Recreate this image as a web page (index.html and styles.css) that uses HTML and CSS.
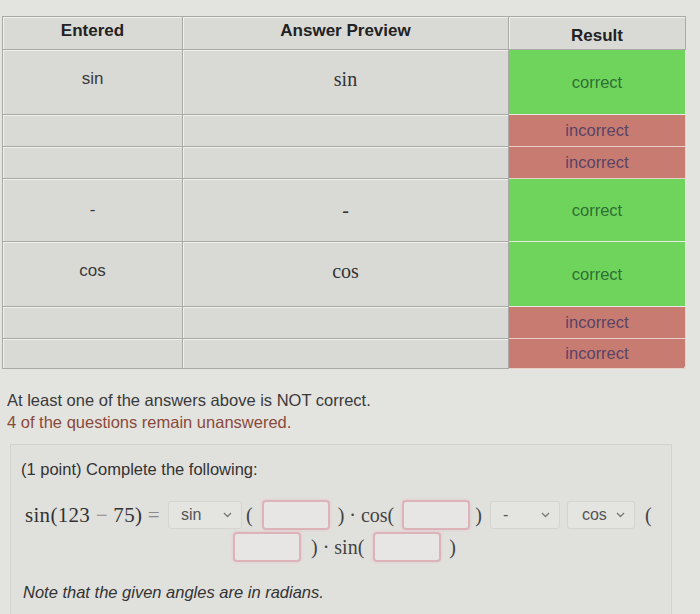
FILE: index.html
```html
<!DOCTYPE html>
<html>
<head>
<meta charset="utf-8">
<link rel="stylesheet" href="styles.css">
</head>
<body>
<div class="page">
  <table class="results">
    <colgroup><col class="c1"><col class="c2"><col class="c3"></colgroup>
    <thead>
      <tr class="head"><th>Entered</th><th>Answer Preview</th><th class="res-h">Result</th></tr>
    </thead>
    <tbody>
      <tr class="tall"><td>sin</td><td class="math">sin</td><td class="ok">correct</td></tr>
      <tr class="short"><td></td><td></td><td class="bad">incorrect</td></tr>
      <tr class="short"><td></td><td></td><td class="bad">incorrect</td></tr>
      <tr class="tall2"><td>-</td><td class="math">-</td><td class="ok">correct</td></tr>
      <tr class="tall"><td>cos</td><td class="math">cos</td><td class="ok">correct</td></tr>
      <tr class="short"><td></td><td></td><td class="bad">incorrect</td></tr>
      <tr class="short2"><td></td><td></td><td class="bad last">incorrect</td></tr>
    </tbody>
  </table>

  <div class="msgs">
    <p class="msg">At least one of the answers above is NOT correct.</p>
    <p class="msg warn">4 of the questions remain unanswered.</p>
  </div>

  <div class="problem">
    <p class="pt">(1 point) Complete the following:</p>
    <div class="eq">
      <div class="line1">
        <span class="m lhs">sin(123 <span class="op">&minus;</span> 75) <span class="op">=</span></span>
        <span class="sel w74"><span>sin</span><svg class="chev" width="9" height="6" viewBox="0 0 9 6"><path d="M1 1 L4.5 4.5 L8 1" fill="none" stroke="#7a7a7a" stroke-width="1.4"/></svg></span>
        <span class="m par p1">(</span>
        <span class="inp"></span>
        <span class="m txt t1">) &middot; cos(</span>
        <span class="inp"></span>
        <span class="m par p2">)</span>
        <span class="sel w70"><span>-</span><svg class="chev" width="9" height="6" viewBox="0 0 9 6"><path d="M1 1 L4.5 4.5 L8 1" fill="none" stroke="#7a7a7a" stroke-width="1.4"/></svg></span>
        <span class="sel w68"><span>cos</span><svg class="chev" width="9" height="6" viewBox="0 0 9 6"><path d="M1 1 L4.5 4.5 L8 1" fill="none" stroke="#7a7a7a" stroke-width="1.4"/></svg></span>
        <span class="m par p3">(</span>
      </div>
      <div class="line2">
        <span class="inp"></span>
        <span class="m txt t2">) &middot; sin(</span>
        <span class="inp"></span>
        <span class="m par p4">)</span>
      </div>
    </div>
    <p class="note">Note that the given angles are in radians.</p>
  </div>
</div>
</body>
</html>
```

FILE: styles.css
```css
html, body {
  margin: 0;
  padding: 0;
}
body {
  background: #e3e3e0;
  font-family: "Liberation Sans", Arial, sans-serif;
  color: #333;
  width: 700px;
  height: 614px;
  overflow: hidden;
}
.page {
  padding: 16px 0 0 2px;
}
.results {
  border-collapse: collapse;
  width: 683px;
  table-layout: fixed;
}
.c1 { width: 180px; }
.c2 { width: 326px; }
.c3 { width: 177px; }
.results th, .results td {
  background: #d9d9d6;
  border: 1px solid #a9a9a6;
  box-shadow: inset 1px 1px 0 #efefec;
  text-align: center;
  vertical-align: middle;
  padding: 0;
  font-size: 17px;
  color: #3a3a3a;
}
.results th {
  font-weight: bold;
  color: #222;
  font-size: 17px;
  padding-bottom: 4px;
  height: 28px;
}
.results th.res-h {
  padding: 6px 0 0 0;
  height: 26px;
}
.tall td { height: 64px; }
.tall2 td { height: 62px; }
.short td { height: 31px; }
.short2 td { height: 29px; }
.tall td:not(.ok) { padding-bottom: 6px; height: 58px; }
.results td.math {
  font-family: "Liberation Serif", "Times New Roman", serif;
  font-size: 20px;
  color: #333;
}
.results td.ok {
  background: #6fd45c;
  color: #2e6f34;
  font-size: 16.5px;
  border-color: #e8e8e4;
  box-shadow: none;
}
.results td.bad {
  background: #c87b70;
  color: #5a4366;
  font-size: 16.5px;
  border-color: #e8d0c8;
  box-shadow: none;
}
.results td.last {
  border-bottom-right-radius: 6px;
}
.msgs {
  margin-top: 20px;
  padding-left: 5px;
}
.msg {
  margin: 0;
  font-size: 16.5px;
  line-height: 22px;
  color: #3a3a3a;
}
.msg.warn {
  color: #8a4a3a;
}
.problem {
  margin: 11px 0 0 8px;
  width: 662px;
  height: 200px;
  background: #e0e0dd;
  border: 1px solid #d2d2cf;
  box-sizing: border-box;
  padding: 15px 0 0 10px;
}
.pt {
  margin: 0;
  font-size: 16.5px;
  line-height: 19px;
  color: #333;
}
.eq {
  margin-top: 20px;
}
.line1, .line2 {
  display: flex;
  align-items: center;
  height: 32px;
}
.line2 { padding-left: 212px; }
.m {
  font-family: "Liberation Serif", "Times New Roman", serif;
  font-size: 20px;
  color: #333;
  white-space: pre;
}
.lhs {
  margin-left: 4px;
  margin-right: 8px;
  font-size: 21px;
  letter-spacing: 0.3px;
}
.op { color: #8a8a8a; }
.par { color: #444; }
.p1 { margin: 0 9px 0 4px; }
.p2 { margin: 0 8px 0 5px; }
.p3 { margin: 0 0 0 10px; }
.p4 { margin: 0 0 0 8px; }
.txt { color: #444; }
.t1 { margin: 0 8px 0 8px; }
.t2 { margin: 0 9px 0 10px; }
.sel {
  display: flex;
  align-items: center;
  justify-content: space-between;
  box-sizing: border-box;
  height: 28px;
  border: 1px solid #d4d4d1;
  border-radius: 3px;
  background: #e4e4e1;
  padding: 0 9px 0 12px;
  font-size: 16px;
  color: #555;
}
.w74 { width: 74px; }
.w70 { width: 70px; margin-right: 7px; }
.w68 { width: 68px; padding-left: 14px; }
.chev { display: block; }
.inp {
  display: block;
  width: 68px;
  height: 30px;
  box-sizing: border-box;
  border: 2px solid #dcb3b8;
  border-radius: 4px;
  background: #e8e5e5;
  box-shadow: 0 0 3px #e6c4c8;
}
.note {
  margin: 20px 0 0 2px;
  font-size: 16.5px;
  line-height: 19px;
  font-style: italic;
  color: #333;
}
```
